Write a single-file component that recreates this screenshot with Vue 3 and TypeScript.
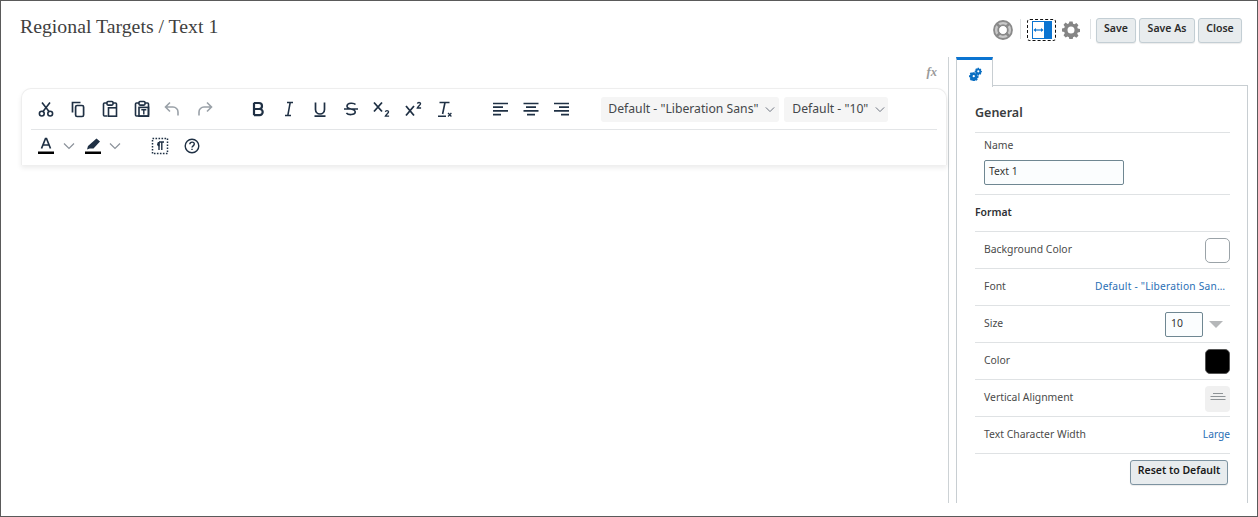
<script setup lang="ts">
interface Row {
  label: string
  kind: 'swatch' | 'swatch-dark' | 'link' | 'size' | 'align'
  value?: string
  long?: boolean
}

const rows: Row[] = [
  { label: 'Background Color', kind: 'swatch' },
  { label: 'Font', kind: 'link', value: 'Default - "Liberation Sans"', long: true },
  { label: 'Size', kind: 'size', value: '10' },
  { label: 'Color', kind: 'swatch-dark' },
  { label: 'Vertical Alignment', kind: 'align' },
  { label: 'Text Character Width', kind: 'link', value: 'Large' }
]
</script>

<template>
  <div class="frame">
    <header class="header">
      <h1 class="title">Regional Targets / Text 1</h1>
      <div class="actions">
        <svg class="lifebuoy" width="22" height="22" viewBox="0 0 22 22" fill="none">
          <circle cx="11" cy="11" r="7" stroke="#c9c9c9" stroke-width="4" />
          <path d="M4.600 4.600l3.600 3.600M17.400 4.600l-3.600 3.600M4.600 17.400l3.600-3.600M17.400 17.400l-3.600-3.600" stroke="#8a8a8a" stroke-width="2.600" />
          <circle cx="11" cy="11" r="9" stroke="#8a8a8a" stroke-width="1.800" />
          <circle cx="11" cy="11" r="4.800" stroke="#8a8a8a" stroke-width="1.800" />
        </svg>
        <span class="sep"></span>
        <span class="focus">
          <svg width="20" height="18" viewBox="0 0 20 18">
            <rect x=".5" y=".5" width="19" height="17" fill="#fff" stroke="#0b74d1" />
            <rect x="12" y="0" width="8" height="18" fill="#0b74d1" />
            <path d="M2.500 9h8" stroke="#0b74d1" stroke-width="1.200" />
            <path d="M1.500 9l2.500-2v4zM11.500 9L9 7v4z" fill="#0b74d1" />
          </svg>
        </span>
        <svg class="gear" width="18" height="18" viewBox="0 0 20 20">
          <path fill="#858585" fill-rule="evenodd" d="M8.200 1h3.600l.5 2.500 1.500.7 2.200-1.400 2.300 2.400-1.400 2.100.6 1.500 2.500.5v3.400l-2.500.5-.6 1.500 1.400 2.100-2.300 2.400-2.200-1.400-1.500.7-.5 2.500H8.200l-.5-2.500-1.500-.7L4 18.700l-2.300-2.400 1.400-2.100-.6-1.500L0 12.200V8.800l2.500-.5.6-1.500-1.400-2.100L4 2.300l2.200 1.400 1.500-.7zM10 6.600a3.900 3.900 0 1 0 0 7.800 3.900 3.900 0 0 0 0-7.800z" transform="translate(0 -.5)" />
        </svg>
        <span class="sep sep-last"></span>
        <button class="btn save">Save</button>
        <button class="btn saveas">Save As</button>
        <button class="btn close">Close</button>
      </div>
    </header>

    <main class="main">
      <section class="editor-col">
        <div class="fx">fx</div>
        <div class="card">
          <div class="bar bar-one">
            <div class="group g-clip">
              <span class="ib"><svg width="20" height="20" viewBox="0 0 20 20" fill="none" stroke="#1f3044" stroke-width="1.600"><circle cx="5.800" cy="14.600" r="2.400" /><circle cx="14.200" cy="14.600" r="2.400" /><path d="M7 12.600L14 3.500M13 12.600L6 3.500" /></svg></span>
              <span class="ib"><svg width="20" height="20" viewBox="0 0 20 20" fill="none" stroke="#1f3044" stroke-width="1.700"><path d="M4.500 13.500V3.500h8" /><rect x="7.600" y="6.500" width="8" height="11" rx="1.500" /></svg></span>
              <span class="ib"><svg width="20" height="20" viewBox="0 0 20 20" fill="none" stroke="#1f3044" stroke-width="1.600"><path d="M7 4H4.500a1 1 0 0 0-1 1v11a1 1 0 0 0 1 1h3M13 4h2.500a1 1 0 0 1 1 1v3" /><rect x="7" y="2.500" width="6" height="3.600" rx="1" /><rect x="8.500" y="8.800" width="8" height="8.400" /></svg></span>
              <span class="ib"><svg width="20" height="20" viewBox="0 0 20 20" fill="none" stroke="#1f3044" stroke-width="1.600"><path d="M7 4H4.500a1 1 0 0 0-1 1v11a1 1 0 0 0 1 1h11a1 1 0 0 0 1-1V5a1 1 0 0 0-1-1H13" /><rect x="7" y="2.500" width="6" height="3.600" rx="1" /><rect x="7" y="8.400" width="9.500" height="8.800" /><path d="M9.300 10.800h5M11.800 10.800v4.600" stroke-width="1.400" /></svg></span>
              <span class="ib ib-undo"><svg width="20" height="20" viewBox="0 0 20 20" fill="none" stroke="#9aa1a8" stroke-width="1.600"><path d="M8 3.500L3.500 8 8 12.500M3.500 8H11a5 5 0 0 1 5 5v3.500" /></svg></span>
              <span class="ib ib-redo"><svg width="20" height="20" viewBox="0 0 20 20" fill="none" stroke="#9aa1a8" stroke-width="1.600"><path d="M12 3.500L16.500 8 12 12.500M16.500 8H9a5 5 0 0 0-5 5v3.500" /></svg></span>
            </div>
            <div class="group g-format">
              <span class="ib fmt"><svg width="20" height="20" viewBox="0 0 20 20" fill="none" stroke="#1f3044" stroke-width="2.200"><path d="M6 3.800v12.400M6 4h5a3 3 0 0 1 0 6H6M6 10h5.600a3.100 3.100 0 0 1 0 6.200H6" /></svg></span>
              <span class="ib fmt"><svg width="20" height="20" viewBox="0 0 20 20" fill="none" stroke="#1f3044" stroke-width="1.500"><path d="M8 3.500h6M6 16.500h6M11.200 3.500L8.800 16.500" /></svg></span>
              <span class="ib fmt"><svg width="20" height="20" viewBox="0 0 20 20" fill="none" stroke="#1f3044" stroke-width="1.700"><path d="M5.500 3.500v7a4.500 4.500 0 0 0 9 0v-7M4.500 17.200h11" /></svg></span>
              <span class="ib fmt"><svg width="20" height="20" viewBox="0 0 20 20" fill="none" stroke="#1f3044" stroke-width="1.600"><path d="M3 10h14M14.500 5.600C13 3.800 6.400 3.600 6 6.800c-.3 2.200 2.400 2.800 4 3.200 2.500.6 4.600 1.400 4.200 3.400-.5 2.800-7 2.800-8.800.6" /></svg></span>
              <span class="ib fmt"><svg width="20" height="20" viewBox="0 0 20 20" fill="none" stroke="#1f3044" stroke-width="1.800"><path d="M2 3.500l8 9M10 3.500l-8 9" /><path d="M13.400 12.800c.2-1.500 3-1.500 3.200 0 .1 1.300-2.800 2.800-3.300 4.400h3.800" stroke-width="1.300" /></svg></span>
              <span class="ib fmt"><svg width="20" height="20" viewBox="0 0 20 20" fill="none" stroke="#1f3044" stroke-width="1.800"><path d="M2 7l8 9.500M10 7l-8 9.500" /><path d="M13.400 4.600c.2-1.500 3-1.500 3.200 0 .1 1.300-2.800 2.800-3.300 4.400h3.800" stroke-width="1.300" /></svg></span>
              <span class="ib fmt"><svg width="20" height="20" viewBox="0 0 20 20" fill="none" stroke="#1f3044" stroke-width="1.600"><path d="M4.500 3.500h10M10 3.500L7.600 15M3 17.200h8" /><path d="M13 14l3.400 3.500M16.400 14L13 17.500" stroke-width="1.200" /></svg></span>
            </div>
            <div class="group g-align">
              <span class="ib al"><svg width="20" height="20" viewBox="0 0 20 20" stroke="#1f3044" stroke-width="1.700"><path d="M3 4.500h15M3 8.200h10M3 11.900h15M3 15.600h8" /></svg></span>
              <span class="ib al"><svg width="20" height="20" viewBox="0 0 20 20" stroke="#1f3044" stroke-width="1.700"><path d="M2.500 4.500h15M5 8.200h10M2.500 11.900h15M6 15.600h8" /></svg></span>
              <span class="ib al"><svg width="20" height="20" viewBox="0 0 20 20" stroke="#1f3044" stroke-width="1.700"><path d="M2 4.500h15M7 8.200h10M2 11.900h15M9 15.600h8" /></svg></span>
            </div>
            <div class="select select-font">
              <span class="select-text">Default - "Liberation Sans"</span>
              <svg class="chev" width="10" height="7" viewBox="0 0 12 8" fill="none" stroke="#6d7480" stroke-width="1.200"><path d="M1 1.500l5 5 5-5" /></svg>
            </div>
            <div class="select select-size">
              <span class="select-text">Default - "10"</span>
              <svg class="chev" width="10" height="7" viewBox="0 0 12 8" fill="none" stroke="#6d7480" stroke-width="1.200"><path d="M1 1.500l5 5 5-5" /></svg>
            </div>
          </div>
          <div class="bar bar-two">
            <span class="ib color"><svg width="20" height="20" viewBox="0 0 20 20" fill="none"><path d="M5.500 12.500L9.500 2.500h1l4 10M7 9h6" stroke="#1f3044" stroke-width="1.700" /><rect x="2" y="15.500" width="16" height="2.500" fill="#000" /></svg></span>
            <svg class="chev chev-a" width="12" height="8" viewBox="0 0 12 8" fill="none" stroke="#8b929a" stroke-width="1.200"><path d="M1 1.500l5 5 5-5" /></svg>
            <span class="ib color"><svg width="20" height="20" viewBox="0 0 20 20"><path fill="#1f3044" d="M13.500 2.500l3.500 3-6.500 7H6.800l-2.800.9 1-3.300z" /><rect x="2" y="15.500" width="16" height="2.500" fill="#000" /></svg></span>
            <svg class="chev chev-b" width="12" height="8" viewBox="0 0 12 8" fill="none" stroke="#8b929a" stroke-width="1.200"><path d="M1 1.500l5 5 5-5" /></svg>
            <span class="ib para"><svg width="18" height="18" viewBox="0 0 18 18" fill="none"><rect x="1.500" y="1.500" width="15" height="15" stroke="#1f3044" stroke-width="1.500" stroke-dasharray="1.600 1.400" /><path d="M8 5h5M8 5v8M10.800 5v8" stroke="#1f3044" stroke-width="1.400" /><path d="M8.500 4.800a2.400 2.400 0 0 0 0 4.800z" fill="#1f3044" /></svg></span>
            <span class="ib"><svg width="18" height="18" viewBox="0 0 18 18" fill="none" stroke="#1f3044" stroke-width="1.400"><circle cx="9" cy="9" r="6.800" /><path d="M6.800 7.200c.2-2.800 4.500-2.800 4.500-.1 0 1.700-2.300 1.800-2.300 3.500" /><path d="M9 11.800v1.300" /></svg></span>
          </div>
        </div>
      </section>

      <aside class="side">
        <div class="tabs">
          <div class="tab">
            <svg width="14" height="14" viewBox="0 0 14 14" fill="#0b6fc2">
              <path fill-rule="evenodd" d="M4 6h2l.2 1 .8.4.9-.6 1.300 1.300-.6.900.4.800 1 .2v1.900l-1 .2-.4.800.6.900-1.300 1.300-.9-.6-.8.400-.2 1H4l-.2-1-.8-.4-.9.600L.8 13.100l.6-.9-.4-.8-1-.2V9.300l1-.2.400-.8-.6-.9L2.100 6.100l.9.6.8-.4zm1 3a1.200 1.200 0 1 0 0 2.400A1.200 1.200 0 0 0 5 9z" transform="translate(1 -.5) scale(.95)" />
              <path fill-rule="evenodd" d="M9.600.8h1.400l.1.800.6.300.7-.4.900 1-.4.700.2.600.8.100v1.400l-.8.100-.2.600.4.700-.9 1-.7-.4-.6.300-.1.800H9.600l-.1-.8-.6-.3-.7.400-.9-1 .4-.7-.2-.6-.8-.1V3.700l.8-.1.200-.6-.4-.7.9-1 .7.400.6-.3zm.7 2.400a1.100 1.100 0 1 0 0 2.200 1.100 1.100 0 0 0 0-2.200z" />
            </svg>
          </div>
        </div>
        <div class="panel">
          <h2 class="general">General</h2>
          <div class="name-block">
            <label class="label">Name</label>
            <div class="field name-field">Text 1</div>
          </div>
          <h3 class="format">Format</h3>
          <div v-for="row in rows" :key="row.label" class="row">
            <span class="label">{{ row.label }}</span>
            <span v-if="row.kind === 'swatch'" class="swatch"></span>
            <span v-else-if="row.kind === 'swatch-dark'" class="swatch dark"></span>
            <span v-else-if="row.kind === 'link'" class="link" :class="{ 'link-long': row.long }">{{ row.value }}</span>
            <span v-else-if="row.kind === 'size'" class="size-wrap">
              <span class="field size-field">{{ row.value }}</span>
              <svg width="14" height="7" viewBox="0 0 14 7"><path d="M0 0h14L7 7z" fill="#b5b7b9" /></svg>
            </span>
            <span v-else class="align-btn">
              <svg width="16" height="8" viewBox="0 0 16 8" stroke="#8e9396"><path d="M3 .5h10M.5 3.500h15M.5 6.500h15" /></svg>
            </span>
          </div>
          <div class="reset-row">
            <button class="btn reset">Reset to Default</button>
          </div>
        </div>
      </aside>
    </main>
  </div>
</template>

<style>
html, body { margin: 0; background: #fff; }
</style>

<style scoped>
.frame {
  width: 1258px;
  height: 517px;
  box-sizing: border-box;
  border: 1px solid #5a5a5a;
  background: #fff;
  display: flex;
  flex-direction: column;
  overflow: hidden;
  font-family: "Noto Sans", sans-serif;
  color: #333;
}
.header {
  height: 56px;
  flex: none;
  display: flex;
  justify-content: space-between;
  padding: 0 15px 0 19px;
}
.title {
  margin: 13px 0 0;
  font: 400 19.800px/24px "Liberation Serif", serif;
  color: #3f3f3f;
}
.actions {
  display: flex;
  align-items: flex-start;
  padding-top: 17px;
}
.lifebuoy { margin-top: 1px; }
.sep {
  width: 1px;
  height: 20px;
  background: #dfe2e4;
  margin: 1px 6px 0 6px;
}
.focus {
  width: 29px;
  height: 22px;
  box-sizing: border-box;
  margin-top: 1px;
  border: 1px dashed #111;
  border-radius: 3px;
  display: flex;
  align-items: center;
  justify-content: center;
}
.gear { margin: 3px 0 0 6px; }
.sep-last { margin: 1px 5px 0 10px; }
.btn {
  height: 25px;
  box-sizing: border-box;
  border: 1px solid #c3ced4;
  border-radius: 3px;
  background: #e8ecee;
  font: 600 10.500px/16px "Noto Sans", sans-serif;
  color: #2b2b2b;
  padding: 0 0 5px;
  box-shadow: 0 1px 1px rgba(0, 0, 0, .08);
}
.save { width: 40px; }
.saveas { width: 56px; margin-left: 3px; }
.close { width: 44px; margin-left: 3px; }
.main {
  flex: 1;
  display: flex;
  padding-bottom: 13px;
  min-height: 0;
}
.editor-col {
  width: 948px;
  flex: none;
  box-sizing: border-box;
  padding-left: 20px;
  border-right: 1px solid #cdd2d5;
}
.fx {
  height: 31px;
  box-sizing: border-box;
  padding: 6px 11px 0 0;
  text-align: right;
  font: italic 700 12.500px/18px "Liberation Serif", serif;
  color: #9a9a9a;
}
.card {
  width: 926px;
  height: 77px;
  box-sizing: border-box;
  border: 1px solid #eeeeee;
  border-bottom: 0;
  border-radius: 10px 10px 0 0;
  padding: 0 9px;
  box-shadow: 0 3px 5px rgba(0, 0, 0, .08);
  background: #fff;
}
.bar { display: flex; align-items: center; }
.bar-one {
  height: 40px;
  border-bottom: 1px solid #e3e5e7;
}
.bar-two { height: 32px; }
.group { display: flex; align-items: center; }
.g-clip { margin-left: -1px; }
.ib {
  width: 32px;
  height: 26px;
  flex: none;
  display: flex;
  align-items: center;
  justify-content: center;
}
.ib-undo { margin-left: -2px; }
.ib-redo { margin-left: 1px; }
.g-format { margin-left: 21px; }
.fmt { width: 31.200px; }
.g-align { margin-left: 24px; }
.al { width: 31px; }
.select {
  height: 25px;
  box-sizing: border-box;
  background: #f5f5f5;
  border-radius: 3px;
  display: flex;
  align-items: center;
  white-space: nowrap;
  font-size: 12.200px;
  color: #44474a;
  padding-left: 7px;
}
.select-text { margin-top: -2px; }
.select-font { width: 178px; margin-left: 24px; }
.select-size { width: 104px; margin-left: 5px; padding-left: 8px; }
.chev { flex: none; }
.select .chev { margin-left: 7px; }
.color { width: 30px; }
.chev-a { margin: 0 3px 0 2px; }
.chev-b { margin: 0 0 0 1px; }
.para { margin-left: 23px; }
.side {
  margin-left: 7px;
  width: 292px;
  flex: none;
  display: flex;
  flex-direction: column;
}
.tabs {
  height: 29px;
  flex: none;
  margin-bottom: -1px;
  position: relative;
  z-index: 1;
}
.tab {
  width: 37px;
  height: 30px;
  box-sizing: border-box;
  background: #fff;
  border-top: 3px solid #0b74d1;
  border-right: 1px solid #c8ced2;
  border-left: 1px solid #c8ced2;
  display: flex;
  align-items: center;
  justify-content: center;
}
.panel {
  flex: 1;
  box-sizing: border-box;
  border: 1px solid #c8ced2;
  border-bottom: 0;
  padding: 0 17px 0 18px;
}
.general {
  margin: 0;
  height: 47px;
  box-sizing: border-box;
  padding-top: 18px;
  border-bottom: 1px solid #dfe2e4;
  font: 600 12.500px/18px "Noto Sans", sans-serif;
  color: #3a3d40;
}
.name-block {
  height: 62px;
  box-sizing: border-box;
  padding: 4px 0 0 9px;
  border-bottom: 1px solid #dfe2e4;
}
.label {
  display: block;
  font-size: 10.400px;
  line-height: 16px;
  color: #4a4a4a;
}
.field {
  box-sizing: border-box;
  border: 1px solid #6f8792;
  border-radius: 2px;
  background: #fbfdfe;
  font-size: 10.400px;
  color: #333;
}
.name-field {
  width: 140px;
  height: 25px;
  margin-top: 7px;
  padding-left: 4px;
  line-height: 20px;
}
.format {
  margin: 0;
  height: 37px;
  box-sizing: border-box;
  padding-top: 9px;
  border-bottom: 1px solid #dfe2e4;
  font: 600 10.400px/16px "Noto Sans", sans-serif;
  color: #2e3033;
}
.row {
  height: 37px;
  box-sizing: border-box;
  padding-left: 9px;
  border-bottom: 1px solid #dfe2e4;
  display: flex;
  align-items: center;
  justify-content: space-between;
}
.row .label { margin-top: -2px; }
.swatch {
  width: 25px;
  height: 25px;
  box-sizing: border-box;
  border: 1px solid #9ba3a8;
  border-radius: 5px;
  background: #fff;
}
.dark { background: #000; border-color: #555; }
.link {
  white-space: nowrap;
  font-size: 10.200px;
  color: #2a6fb5;
  margin-top: -2px;
}
.link-long {
  width: 131px;
  margin-right: 4px;
  overflow: hidden;
  text-overflow: ellipsis;
  letter-spacing: .22px;
}
.size-wrap {
  display: flex;
  align-items: center;
  gap: 6px;
  margin-right: 7px;
}
.size-field {
  width: 38px;
  height: 25px;
  padding-left: 5px;
  line-height: 20px;
}
.align-btn {
  width: 25px;
  height: 26px;
  margin-top: 2px;
  border-radius: 4px;
  background: #f0f0f0;
  display: flex;
  justify-content: center;
  padding-top: 7px;
  box-sizing: border-box;
}
.reset-row {
  display: flex;
  justify-content: flex-end;
  padding: 6px 2px 0 0;
}
.reset {
  width: 98px;
  border-color: #7d93a1;
  color: #1a1a1a;
}
</style>
